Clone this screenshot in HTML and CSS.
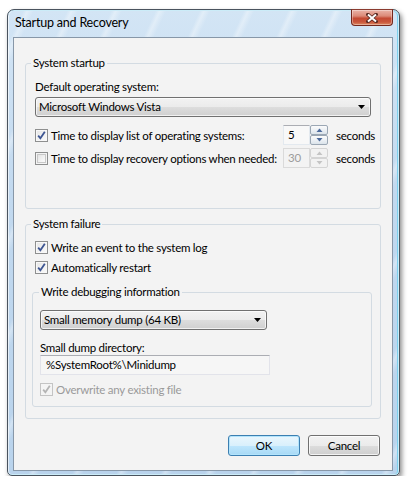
FILE: index.html
```html
<!DOCTYPE html>
<html>
<head>
<meta charset="utf-8">
<title>Startup and Recovery</title>
<link rel="stylesheet" href="styles.css">
</head>
<body>
<div class="window">
  <div class="titlebar">
    <span class="title">Startup and Recovery</span>
    <div class="close">
      <svg width="12" height="10" viewBox="0 0 12 10"><path d="M2 1.5 L10 8.5 M10 1.5 L2 8.5" stroke="#5a2a22" stroke-width="3.6" stroke-linecap="square"/><path d="M2 1.5 L10 8.5 M10 1.5 L2 8.5" stroke="#fff" stroke-width="2"/></svg>
    </div>
  </div>
  <div class="client">
    <fieldset class="group startup">
      <legend>System startup</legend>
      <div class="label">Default operating system:</div>
      <div class="combo os"><span>Microsoft Windows Vista</span><svg class="arrow" width="7" height="4" viewBox="0 0 7 4"><polygon points="0,0 7,0 3.5,4" fill="#000"/></svg></div>
      <div class="timerow first">
        <label class="check"><span class="box on"><svg width="11" height="11" viewBox="0 0 11 11"><path d="M2.2 5.6 L4.4 8.3 L8.8 1.8" fill="none" stroke="#3d5592" stroke-width="1.8"/></svg></span>Time to display list of operating systems:</label>
        <div class="spin"><span class="edit">5</span><span class="spinbtns"><span class="sb"><svg width="7" height="4" viewBox="0 0 7 4"><polygon points="0.5,4 6.5,4 3.5,0.5" fill="#4d6b9c"/></svg></span><span class="sb"><svg width="7" height="4" viewBox="0 0 7 4"><polygon points="0.5,0 6.5,0 3.5,3.5" fill="#4d6b9c"/></svg></span></span></div>
        <span class="unit">seconds</span>
      </div>
      <div class="timerow">
        <label class="check"><span class="box"></span>Time to display recovery options when needed:</label>
        <div class="spin disabled"><span class="edit">30</span><span class="spinbtns"><span class="sb"><svg width="7" height="4" viewBox="0 0 7 4"><polygon points="0.5,4 6.5,4 3.5,0.5" fill="#c4c4c4"/></svg></span><span class="sb"><svg width="7" height="4" viewBox="0 0 7 4"><polygon points="0.5,0 6.5,0 3.5,3.5" fill="#c4c4c4"/></svg></span></span></div>
        <span class="unit">seconds</span>
      </div>
    </fieldset>

    <fieldset class="group failure">
      <legend>System failure</legend>
      <label class="check row"><span class="box on"><svg width="11" height="11" viewBox="0 0 11 11"><path d="M2.2 5.6 L4.4 8.3 L8.8 1.8" fill="none" stroke="#3d5592" stroke-width="1.8"/></svg></span>Write an event to the system log</label>
      <label class="check row second"><span class="box on"><svg width="11" height="11" viewBox="0 0 11 11"><path d="M2.2 5.6 L4.4 8.3 L8.8 1.8" fill="none" stroke="#3d5592" stroke-width="1.8"/></svg></span>Automatically restart</label>
      <fieldset class="group debug">
        <legend>Write debugging information</legend>
        <div class="combo dump"><span>Small memory dump (64 KB)</span><svg class="arrow" width="7" height="4" viewBox="0 0 7 4"><polygon points="0,0 7,0 3.5,4" fill="#000"/></svg></div>
        <div class="label dirlabel">Small dump directory:</div>
        <div class="textbox">%SystemRoot%\Minidump</div>
        <label class="check row disabled overwrite"><span class="box on"><svg width="11" height="11" viewBox="0 0 11 11"><path d="M2.2 5.6 L4.4 8.3 L8.8 1.8" fill="none" stroke="#b4b4b4" stroke-width="1.8"/></svg></span>Overwrite any existing file</label>
      </fieldset>
    </fieldset>

    <div class="buttons">
      <button class="btn default">OK</button>
      <button class="btn">Cancel</button>
    </div>
  </div>
</div>
</body>
</html>
```

FILE: styles.css
```css
html, body {
  margin: 0;
  padding: 0;
  background: #ffffff;
}

body {
  font-family: "Segoe UI", Lato, "Noto Sans", sans-serif;
  font-size: 11.5px;
  letter-spacing: -0.25px;
  color: #000;
}

.window {
  margin: 9px 0 0 7px;
  width: 393px;
  height: 467px;
  box-sizing: border-box;
  border: 1px solid #4a535e;
  border-radius: 7px 7px 5px 5px;
  background:
    repeating-linear-gradient(115deg, rgba(255,255,255,0) 0px, rgba(255,255,255,0) 14px, rgba(255,255,255,0.35) 18px, rgba(255,255,255,0) 24px, rgba(255,255,255,0) 40px),
    linear-gradient(180deg, #d3e5f5 0%, #c2d9ef 40%, #b9d3ec 100%);
  box-shadow: 2px 3px 5px rgba(0, 0, 0, 0.45), inset 0 0 0 1px rgba(255, 255, 255, 0.6), inset -1px 0 0 1px #7dd0ee;
  display: flex;
  flex-direction: column;
}

.titlebar {
  height: 27px;
  display: flex;
  justify-content: space-between;
  align-items: flex-start;
  flex: none;
}

.title {
  padding: 5px 0 0 7px;
  line-height: 16px;
  font-size: 12.5px;
  letter-spacing: -0.2px;
  color: #000;
}

.close {
  width: 42px;
  height: 17px;
  margin: -1px 6px 0 0;
  box-sizing: border-box;
  border: 1px solid #74281d;
  border-top-color: #8a3a2e;
  border-radius: 0 0 4px 4px;
  background: linear-gradient(180deg, #eab3a7 0%, #dc8a78 40%, #c44a33 55%, #c9573c 80%, #dd8a62 100%);
  box-shadow: inset 0 0 0 1px rgba(255, 255, 255, 0.35);
  display: flex;
  align-items: center;
  justify-content: center;
}

.client {
  flex: 1;
  margin: 0 6px 4px 5px;
  border: 1px solid #8797a8;
  background: #f3f3f3;
  padding: 18px 11px 0 11px;
  display: flex;
  flex-direction: column;
}

.group {
  margin: 0;
  min-width: 0;
  border: 1px solid #d3dbe2;
  border-radius: 3px;
  padding: 0 9px;
}

.group legend {
  padding: 0 2px;
  margin-left: -4px;
  line-height: 14px;
}

.startup {
  padding-top: 9px;
  padding-bottom: 40px;
}

.failure {
  margin-top: 8px;
  padding-top: 8px;
  padding-bottom: 11px;
}

.label {
  line-height: 15px;
  height: 15px;
}

.combo {
  box-sizing: border-box;
  height: 20px;
  margin-top: 3px;
  border: 1px solid #707070;
  border-radius: 3px;
  background: linear-gradient(180deg, #f2f2f2 0%, #ebebeb 50%, #dddddd 51%, #cfcfcf 100%);
  box-shadow: inset 0 0 0 1px rgba(255, 255, 255, 0.7);
  display: flex;
  align-items: center;
  justify-content: space-between;
  padding: 0 5px 0 3px;
  line-height: 16px;
}

.timerow {
  display: grid;
  grid-template-columns: 248px 45px auto;
  align-items: center;
  height: 20px;
  margin-top: 3px;
}

.timerow.first {
  margin-top: 8px;
}

.check {
  display: flex;
  align-items: center;
  gap: 3px;
  white-space: nowrap;
}

.box {
  width: 13px;
  height: 13px;
  box-sizing: border-box;
  border: 1px solid #8e8f8f;
  background: linear-gradient(135deg, #dcdcdc 0%, #f4f4f4 60%, #ffffff 100%);
  box-shadow: inset 0 0 0 1px #f4f4f4, inset 0 0 0 2px #c8c8c8;
  display: flex;
  align-items: center;
  justify-content: center;
  flex: none;
}

.box.on {
  box-shadow: inset 0 0 0 1px #f8f8f8;
  background: linear-gradient(135deg, #e6e6e6 0%, #fafafa 100%);
}

.spin {
  display: flex;
  height: 20px;
}

.spin .edit {
  box-sizing: border-box;
  width: 27px;
  height: 20px;
  border: 1px solid #e3e9ef;
  border-top-color: #abadb3;
  background: #f8f8f8;
  padding-left: 4px;
  line-height: 18px;
}

.spinbtns {
  display: flex;
  flex-direction: column;
  width: 18px;
  height: 20px;
}

.sb {
  flex: 1;
  box-sizing: border-box;
  border: 1px solid #9ba7b4;
  border-radius: 2px;
  background: linear-gradient(180deg, #fbfbfb 0%, #e9eef3 60%, #dbe3ea 100%);
  display: flex;
  align-items: center;
  justify-content: center;
}

.spin.disabled .edit {
  color: #9c9c9c;
  border-color: #dadada;
  background: #f3f3f3;
}

.spin.disabled .sb {
  border-color: #d4d4d4;
  background: #f2f2f2;
}

.unit {
  margin-left: 8px;
  white-space: nowrap;
}

.row {
  height: 17px;
}

.row.second {
  margin-top: 3px;
}

.debug {
  margin: 9px -1px 0 -3px;
  padding: 11px 7px 8px 7px;
}

.debug legend {
  margin-left: -1px;
}

.combo.dump {
  margin-top: 0;
  width: 227px;
}

.dirlabel {
  margin-top: 11px;
  line-height: 14px;
  height: 14px;
}

.textbox {
  box-sizing: border-box;
  width: 230px;
  height: 20px;
  border: 1px solid #e2e3ea;
  border-top-color: #abadb3;
  background: #f6f6f6;
  padding-left: 5px;
  line-height: 18px;
}

.overwrite {
  margin-top: 6px;
}

.check.disabled {
  color: #9a9a9a;
}

.check.disabled .box {
  border-color: #c4c4c4;
  background: #f4f4f4;
  box-shadow: none;
}

.buttons {
  display: flex;
  justify-content: flex-end;
  gap: 8px;
  margin-top: 16px;
  margin-right: 1px;
}

.btn {
  width: 72px;
  height: 21px;
  box-sizing: border-box;
  font-family: inherit;
  font-size: 11.5px;
  letter-spacing: -0.25px;
  color: #000;
  padding: 0;
  border: 1px solid #707070;
  border-radius: 3px;
  background: linear-gradient(180deg, #f2f2f2 0%, #ebebeb 50%, #dddddd 51%, #cfcfcf 100%);
  box-shadow: inset 0 0 0 1px rgba(255, 255, 255, 0.75);
}

.btn.default {
  border-color: #3c7fb1;
  background: linear-gradient(180deg, #eaf6fd 0%, #d9f0fc 50%, #bee6fd 51%, #a7d9f5 100%);
  box-shadow: inset 0 0 0 1px #b2e4fc;
}
```
